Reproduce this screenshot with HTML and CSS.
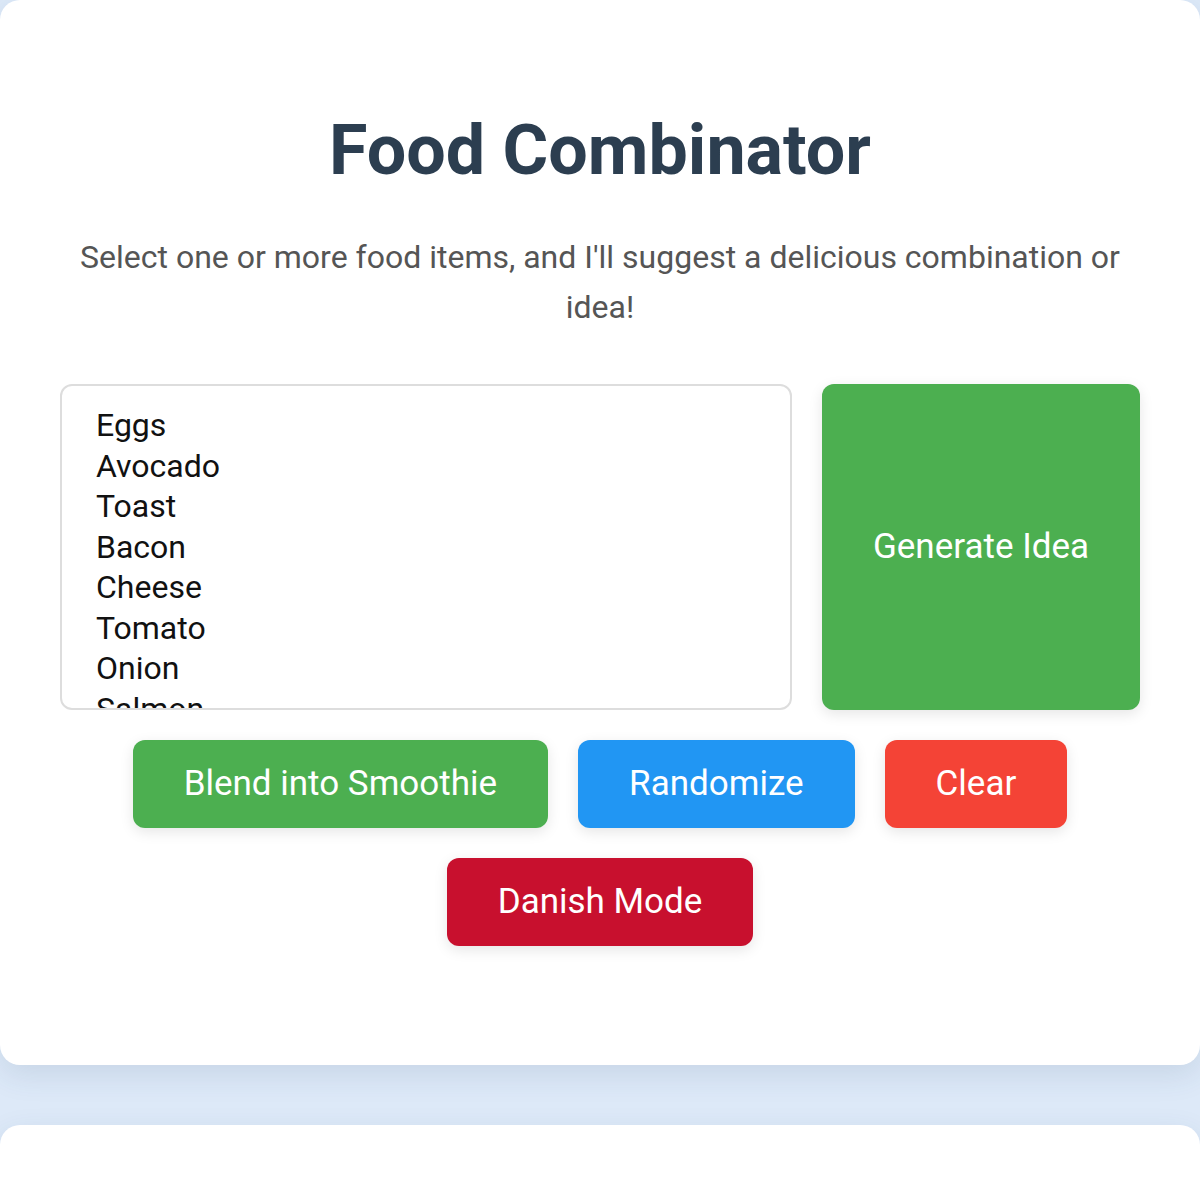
FILE: index.html
```html
<!DOCTYPE html>
<html lang="en">
<head>
<meta charset="utf-8">
<title>Food Combinator</title>
<link rel="stylesheet" href="styles.css">
</head>
<body>
<main class="page">
  <section class="card">
    <h1 class="title">Food Combinator</h1>
    <p class="subtitle">Select one or more food items, and I'll suggest a delicious combination or idea!</p>
    <div class="picker">
      <select class="food-list" multiple>
        <option>Eggs</option>
        <option>Avocado</option>
        <option>Toast</option>
        <option>Bacon</option>
        <option>Cheese</option>
        <option>Tomato</option>
        <option>Onion</option>
        <option>Salmon</option>
        <option>Spinach</option>
        <option>Mushrooms</option>
      </select>
      <button class="btn btn-generate" type="button">Generate Idea</button>
    </div>
    <div class="actions">
      <button class="btn btn-green" type="button">Blend into Smoothie</button>
      <button class="btn btn-blue" type="button">Randomize</button>
      <button class="btn btn-red" type="button">Clear</button>
      <button class="btn btn-danish" type="button">Danish Mode</button>
    </div>
  </section>
  <section class="card card-next"></section>
</main>
</body>
</html>
```
FILE: styles.css
```css
* { box-sizing: border-box; }

html, body {
  margin: 0;
  padding: 0;
  background: #dde9f8;
  font-family: Roboto, "Noto Sans", "Liberation Sans", sans-serif;
}

.page {
  display: flex;
  flex-direction: column;
  gap: 60px;
}

.card {
  background: #ffffff;
  border-radius: 20px;
  box-shadow: 0 10px 30px rgba(40, 70, 110, 0.12);
  padding: 60px 60px 119px;
}

.card-next {
  min-height: 200px;
  padding: 0;
}

.title {
  margin: 48px 0 40px;
  text-align: center;
  font-size: 70px;
  font-weight: 700;
  line-height: 84px;
  color: #2c3e50;
}

.subtitle {
  margin: 0 0 52px;
  text-align: center;
  font-size: 32px;
  line-height: 50px;
  color: #555555;
}

.picker {
  display: flex;
  gap: 30px;
  align-items: stretch;
}

.food-list {
  flex: 1;
  height: 326px;
  padding: 19px 30px 18px;
  border: 2px solid #dddddd;
  border-radius: 12px;
  font-family: Roboto, "Noto Sans", "Liberation Sans", sans-serif;
  font-size: 32px;
  color: #111111;
  background: #ffffff;
  outline: none;
  overflow: hidden;
}

.food-list option {
  padding: 1px 4px 1.5px;
}

.btn {
  border: none;
  border-radius: 12px;
  color: #ffffff;
  font-family: Roboto, "Noto Sans", "Liberation Sans", sans-serif;
  font-size: 35px;
  line-height: 42px;
  padding: 23px 51px;
  box-shadow: 0 4px 14px rgba(0, 0, 0, 0.1);
  cursor: pointer;
}

.btn-generate {
  width: 318px;
  padding: 0 20px;
  background: #4caf50;
}

.actions {
  display: flex;
  flex-wrap: wrap;
  justify-content: center;
  gap: 30px;
  margin-top: 30px;
}

.btn-green { background: #4caf50; }
.btn-blue { background: #2196f3; }
.btn-red { background: #f44336; }
.btn-danish { background: #c8102e; }
```
